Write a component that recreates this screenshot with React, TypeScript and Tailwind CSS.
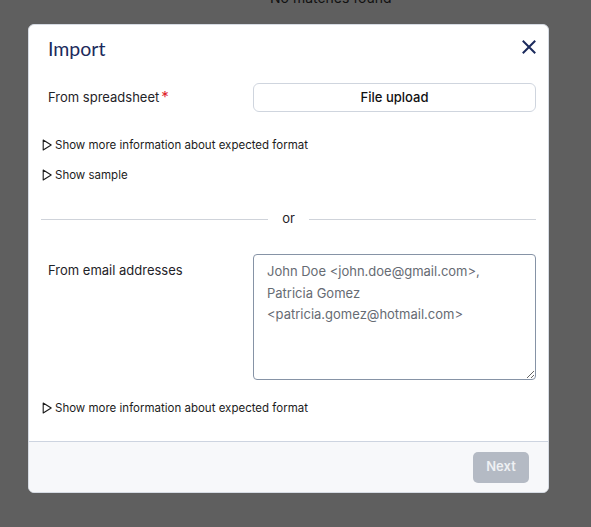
import React from "react";

function Tri() {
  return (
    <svg width="10" height="12" viewBox="0 0 10 12" className="shrink-0">
      <path d="M1.2 1 L9.2 6 L1.2 11 Z" fill="none" stroke="#1a1a1a" strokeWidth="1.1" strokeLinejoin="round" />
    </svg>
  );
}

function Disclosure({ text }: { text: string }) {
  return (
    <div className="flex items-center gap-[3px] h-4 text-[11.5px] text-[#1c1c1c] leading-4 pl-[1px]">
      <Tri />
      <span>{text}</span>
    </div>
  );
}

export default function App() {
  return (
    <div
      className="relative w-[591px] h-[527px] overflow-hidden bg-[#5f5f5f] pt-[24px] pl-[28px]"
      style={{ fontFamily: "Inter, 'Noto Sans', sans-serif" }}
    >
      <div className="absolute top-[-13px] left-[270px] text-[14px] text-[#111]">No matches found</div>
      <div className="w-[521px] h-[469px] bg-white rounded-[6px] flex flex-col overflow-hidden border border-[#d6dbe3]">
        <div className="h-[47px] flex items-center justify-between pl-[19px] pr-[12px]">
          <h1 className="text-[19.5px] text-[#1b2a5c]" style={{ fontFamily: "Lato, Inter, sans-serif" }}>
            Import
          </h1>
          <svg width="14" height="14" viewBox="0 0 14 14" className="mb-[3px]">
            <path d="M1.5 1.5 L12.5 12.5 M12.5 1.5 L1.5 12.5" stroke="#1b2a5c" strokeWidth="2" strokeLinecap="square" />
          </svg>
        </div>
        <div className="flex-1 px-[12px]">
          <div className="mt-[11px] flex items-center h-[29px]">
            <div className="w-[212px] pl-[7px] text-[13px] text-[#1f2328]">
              From spreadsheet<span className="text-[#e0242b] ml-[2px] text-[15px] leading-none">*</span>
            </div>
            <button className="flex-1 h-[29px] border border-[#cfd5de] rounded-[6px] bg-white text-[13px] font-medium text-[#111]">
              File upload
            </button>
          </div>
          <div className="mt-[25px]">
            <Disclosure text="Show more information about expected format" />
          </div>
          <div className="mt-[14px]">
            <Disclosure text="Show sample" />
          </div>
          <div className="mt-[27px] flex items-center h-[18px]">
            <div className="flex-1 h-px bg-[#cfd3da]" />
            <span className="px-[14px] text-[13px] text-[#1f2328]">or</span>
            <div className="flex-1 h-px bg-[#cfd3da]" />
          </div>
          <div className="mt-[26px] flex items-start">
            <div className="w-[212px] pl-[7px] pt-[7px] text-[13px] text-[#1f2328]">From email addresses</div>
            <textarea
              className="flex-1 h-[126px] border border-[#8693a6] rounded-[4px] px-[13px] py-[6px] text-[13px] leading-[21.5px] text-[#555] placeholder:text-[#666b73] outline-none"
              placeholder={"John Doe <john.doe@gmail.com>,\nPatricia Gomez\n<patricia.gomez@hotmail.com>"}
            />
          </div>
          <div className="mt-[20px]">
            <Disclosure text="Show more information about expected format" />
          </div>
        </div>
        <div className="h-[51px] border-t border-[#cdd4e0] bg-[#f7f8fa] flex items-center justify-end pr-[19px]">
          <button className="w-[56px] h-[31px] rounded-[5px] bg-[#b4bac4] text-[#eef0f3] text-[13px] font-semibold">
            Next
          </button>
        </div>
      </div>
    </div>
  );
}
